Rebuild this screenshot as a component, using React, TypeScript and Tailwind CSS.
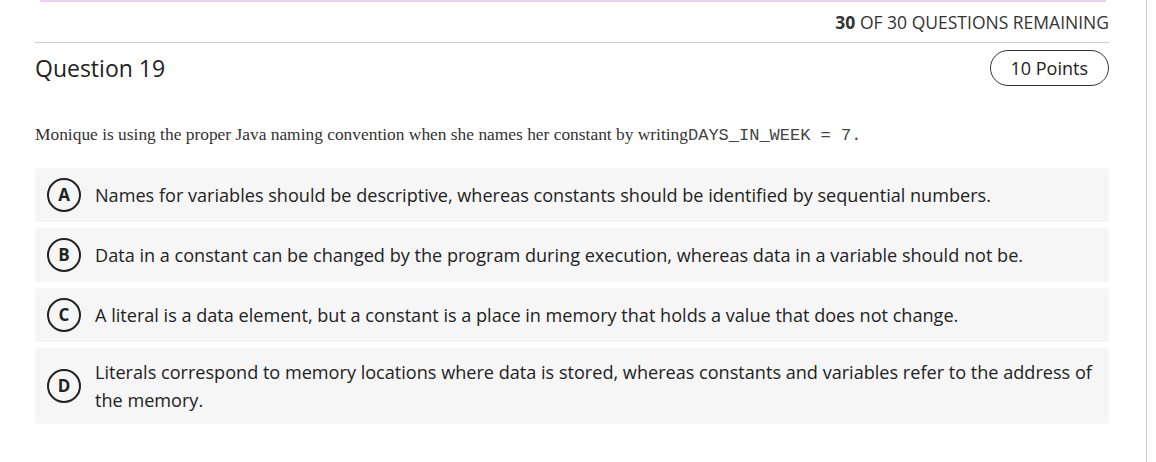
import React from 'react';

const options = [
  { letter: 'A', text: 'Names for variables should be descriptive, whereas constants should be identified by sequential numbers.' },
  { letter: 'B', text: 'Data in a constant can be changed by the program during execution, whereas data in a variable should not be.' },
  { letter: 'C', text: 'A literal is a data element, but a constant is a place in memory that holds a value that does not change.' },
  {
    letter: 'D',
    text: 'Literals correspond to memory locations where data is stored, whereas constants and variables refer to the address of the memory.',
  },
];

export default function App() {
  return (
    <div className="w-[1156px] h-[462px] bg-white overflow-hidden font-['Open_Sans',sans-serif] text-[#222]">
      <div className="w-[1147px] h-full border-r border-[#cfcfcf]">
        {/* bottom edge of previous panel */}
        <div className="ml-[40px] w-[1066px] h-[2px] bg-[#ecd0f0]" />

        <div className="ml-[35px] w-[1074px]">
          {/* Remaining counter */}
          <div className="flex justify-end pt-[8px] pb-[8px] border-b border-[#d0d0d0]">
            <span className="text-[17.5px] leading-[24px] uppercase text-[#333]">
              <span className="font-bold">30</span> of 30 questions remaining
            </span>
          </div>

          {/* Header */}
          <div className="flex items-center justify-between pt-[7px]">
            <h2 className="text-[23px] leading-[36px] text-[#222]">Question 19</h2>
            <div className="h-[36px] px-[20px] flex items-center border border-[#333] rounded-full text-[18px] text-[#222]">
              10 Points
            </div>
          </div>

          {/* Prompt */}
          <p className="mt-[36px] text-[17.4px] leading-[24px] font-['Liberation_Serif',serif] text-[#333]">
            Monique is using the proper Java naming convention when she names her constant by writing
            <span className="font-['Liberation_Mono',monospace] text-[17px] text-[#444]">DAYS_IN_WEEK = 7.</span>
          </p>

          {/* Options */}
          <div className="mt-[20px] flex flex-col gap-[6px]">
            {options.map((o) => (
              <div key={o.letter} className="flex items-center bg-[#f6f6f6] rounded-[3px] pl-[12px] pr-[14px] py-[10px]">
                <div className="w-[34px] h-[34px] shrink-0 rounded-full border-2 border-[#222] flex items-center justify-center text-[17px] font-bold text-[#222]">
                  {o.letter}
                </div>
                <div className="ml-[14px] text-[18.1px] leading-[28px] text-[#222]">{o.text}</div>
              </div>
            ))}
          </div>
        </div>
      </div>
    </div>
  );
}
